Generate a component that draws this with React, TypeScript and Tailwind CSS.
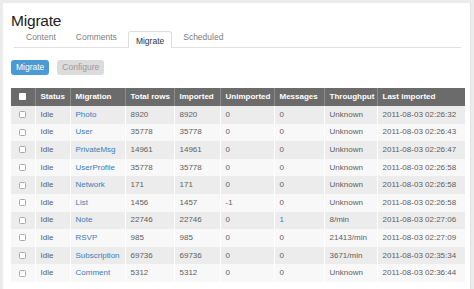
import React from "react";

type Row = {
  name: string;
  total: string;
  imported: string;
  unimported: string;
  messages: string;
  throughput: string;
  last: string;
};

const rows: Row[] = [
  { name: "Photo", total: "8920", imported: "8920", unimported: "0", messages: "0", throughput: "Unknown", last: "2011-08-03 02:26:32" },
  { name: "User", total: "35778", imported: "35778", unimported: "0", messages: "0", throughput: "Unknown", last: "2011-08-03 02:26:43" },
  { name: "PrivateMsg", total: "14961", imported: "14961", unimported: "0", messages: "0", throughput: "Unknown", last: "2011-08-03 02:26:47" },
  { name: "UserProfile", total: "35778", imported: "35778", unimported: "0", messages: "0", throughput: "Unknown", last: "2011-08-03 02:26:58" },
  { name: "Network", total: "171", imported: "171", unimported: "0", messages: "0", throughput: "Unknown", last: "2011-08-03 02:26:58" },
  { name: "List", total: "1456", imported: "1457", unimported: "-1", messages: "0", throughput: "Unknown", last: "2011-08-03 02:26:58" },
  { name: "Note", total: "22746", imported: "22746", unimported: "0", messages: "1", throughput: "8/min", last: "2011-08-03 02:27:06" },
  { name: "RSVP", total: "985", imported: "985", unimported: "0", messages: "0", throughput: "21413/min", last: "2011-08-03 02:27:09" },
  { name: "Subscription", total: "69736", imported: "69736", unimported: "0", messages: "0", throughput: "3671/min", last: "2011-08-03 02:35:34" },
  { name: "Comment", total: "5312", imported: "5312", unimported: "0", messages: "0", throughput: "Unknown", last: "2011-08-03 02:36:44" },
];

const headers = ["Status", "Migration", "Total rows", "Imported", "Unimported", "Messages", "Throughput", "Last imported"];

function Box({ header }: { header?: boolean }) {
  return (
    <span
      className={
        header
          ? "inline-block w-[7px] h-[7px] rounded-[1px] bg-white align-middle"
          : "inline-block w-[7px] h-[7px] rounded-[1.5px] border border-[#a8a8a8] bg-white align-middle"
      }
    />
  );
}

const cell = "border-r border-white pl-[5px] text-[#5e5e5e]";
const link = "border-r border-white pl-[5px] text-[#3b7cb8]";

export default function App() {
  return (
    <div className="w-[474px] h-[289px] overflow-hidden bg-[#ececec] pt-[3px] pl-[3px] font-['Liberation_Sans',Arial,sans-serif]">
      <div className="w-[468px] h-[300px] bg-white border-r border-[#e2e2e2] pl-[8px] pr-[6px]">
        <h1 className="pt-[9px] text-[15.5px] leading-[18px] text-[#222] tracking-[-0.2px]">Migrate</h1>

        <div className="mt-[2px] ml-[3px] mr-[3px] flex items-end border-b border-[#e0e0e0] h-[16px] text-[8.5px] text-[#808080]">
          <span className="px-[12px] pb-[3px]">Content</span>
          <span className="px-[8px] pb-[3px]">Comments</span>
          <span className="ml-[3px] px-[7px] h-[17px] pt-[3px] border border-b-0 border-[#dedede] rounded-t-[3px] bg-white text-[#333] mb-[-1px]">Migrate</span>
          <span className="px-[11px] pb-[3px]">Scheduled</span>
        </div>

        <div className="mt-[12px] flex gap-[8px] text-[8.5px] leading-[15px]">
          <span className="px-[5px] rounded-[3px] bg-[#4b9ad6] text-white">Migrate</span>
          <span className="px-[5px] rounded-[3px] bg-[#dcdcdc] text-[#9a9a9a]">Configure</span>
        </div>

        <table className="mt-[13px] table-fixed border-collapse w-[454px] text-[8px] text-[#5e5e5e]">
          <colgroup>
            <col className="w-[24px]" />
            <col className="w-[35px]" />
            <col className="w-[55px]" />
            <col className="w-[49px]" />
            <col className="w-[46px]" />
            <col className="w-[54px]" />
            <col className="w-[50px]" />
            <col className="w-[53px]" />
            <col className="w-[88px]" />
          </colgroup>
          <thead>
            <tr className="h-[18px] bg-[#6b6b6b] text-white">
              <th className="border-r border-[#8c8c8c] text-center font-normal">
                <Box header />
              </th>
              {headers.map((h, i) => (
                <th
                  key={h}
                  className={
                    i < headers.length - 1
                      ? "border-r border-[#8c8c8c] text-left font-bold pl-[5px]"
                      : "text-left font-bold pl-[5px]"
                  }
                >
                  {h}
                </th>
              ))}
            </tr>
          </thead>
          <tbody>
            {rows.map((r, i) => (
              <tr key={r.name} className={i % 2 === 0 ? "h-[17.6px] bg-[#ececec]" : "h-[17.6px] bg-[#f8f8f8]"}>
                <td className="border-r border-white text-center">
                  <Box />
                </td>
                <td className={cell}>Idle</td>
                <td className={link}>{r.name}</td>
                <td className={cell}>{r.total}</td>
                <td className={cell}>{r.imported}</td>
                <td className={cell}>{r.unimported}</td>
                <td className={r.messages === "1" ? link : cell}>{r.messages}</td>
                <td className={cell}>{r.throughput}</td>
                <td className="pl-[5px] text-[#5e5e5e]">{r.last}</td>
              </tr>
            ))}
          </tbody>
        </table>
      </div>
    </div>
  );
}
